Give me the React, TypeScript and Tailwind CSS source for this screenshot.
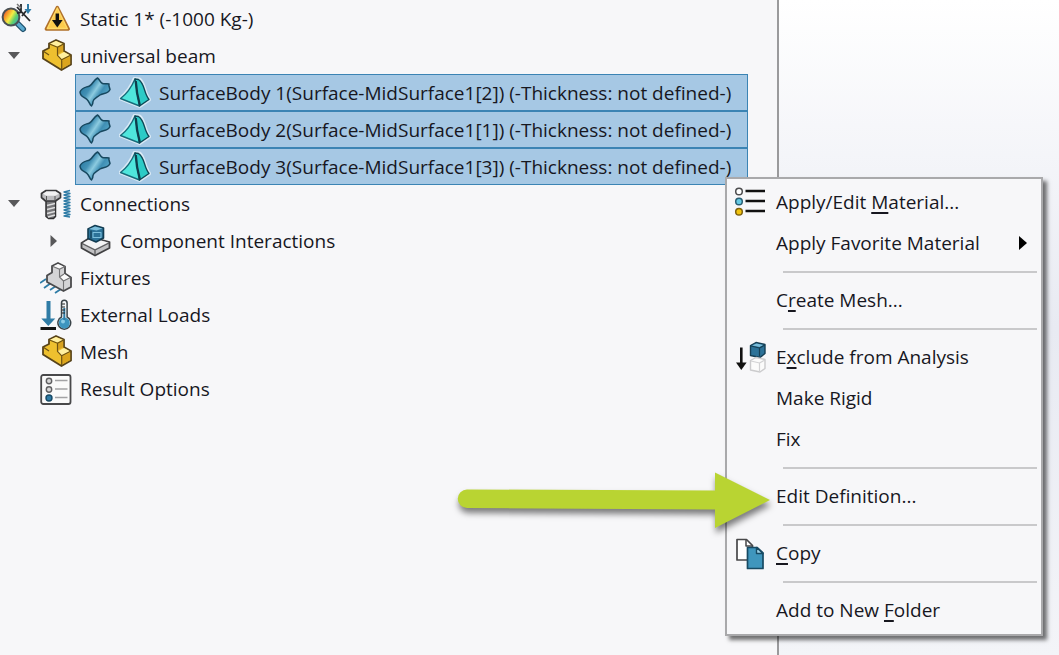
import React from 'react';

type IconProps = { className?: string };

const Svg: React.FC<{ children: React.ReactNode; className?: string; box?: string }> = ({
    children,
    className = 'w-8 h-9',
    box = '0 0 32 36',
}) => (
    <svg viewBox={box} className={`${className} shrink-0`} fill="none" strokeLinejoin="round" aria-hidden="true">
        {children}
    </svg>
);

const StudyIcon: React.FC = () => (
    <Svg>
        <defs>
            <linearGradient id="lens" x1="0" y1="0.2" x2="1" y2="0.8">
                <stop offset="0" stopColor="#e8402c" />
                <stop offset="0.28" stopColor="#f7a62b" />
                <stop offset="0.48" stopColor="#f4ec45" />
                <stop offset="0.7" stopColor="#62d06a" />
                <stop offset="1" stopColor="#2aa9c9" />
            </linearGradient>
        </defs>
        <path d="M17 22l6 6" stroke="#1d4f6b" strokeWidth="6" strokeLinecap="round" />
        <path d="M18 23l5 5" stroke="#5aa9cf" strokeWidth="3.5" strokeLinecap="round" />
        <circle cx="11" cy="16" r="8.4" fill="url(#lens)" stroke="#4a5054" strokeWidth="2" />
        <path d="M17 6l13 14M17 12l5-1M21 3v8M26 10l-4 5" stroke="#26282a" strokeWidth="1.8" />
        <path d="M17 3l4 4" stroke="#777" strokeWidth="1.4" />
        <path d="M28 3v6" stroke="#2f7ca6" strokeWidth="2" />
        <path d="M24.500 8h7L28 13z" fill="#2f7ca6" />
    </Svg>
);

const WarningIcon: React.FC = () => (
    <Svg className="w-7 h-9" box="0 0 28 36">
        <path d="M13.300 6.500L24.300 28H2.300z" fill="#f9c84a" stroke="#b0702a" strokeWidth="3.400" />
        <path d="M13.300 7L23.300 27.500H3.300z" fill="#fccb4d" stroke="#ffd968" strokeWidth="1.400" />
        <path d="M13.300 12.500v8" stroke="#111" strokeWidth="3.400" />
        <path d="M8 19h10.600l-5.300 7.500z" fill="#111" />
    </Svg>
);

const PartIcon: React.FC = () => (
    <Svg>
        <path
            d="M9 5.500L16 2l8 3.500v7.500l7 4v9.500L21.500 32 3 20.500V13l6-3z"
            fill="#eec02f"
            stroke="#57431a"
            strokeWidth="1.8"
        />
        <path d="M10 5.800L16 3l7 2.900-6 2.700z" fill="#fff0a0" />
        <path d="M17.500 17.500l6.500-3.500 6 3.300-8.500 4z" fill="#fff0a0" />
        <path d="M22 22.500l8.200-4v7.600l-8.200 4.500z" fill="#dca51d" />
        <path d="M17.500 9.500l5.700-2.700v6.500l-5.700 3z" fill="#d9a321" />
        <path d="M9.500 6l8 3.300v8l4.200 4.500v9.500M17.500 9.300L24 5.800M21.700 21.800L31 17M3 13l6 4" stroke="#6e5213" strokeWidth="1.2" />
    </Svg>
);

const FixtureIcon: React.FC = () => (
    <Svg>
        <path d="M0 23l6-4M4 28l7-5M10 30l6-4M15 33l6-4" stroke="#2f7ca6" strokeWidth="1.8" />
        <path
            d="M12 6l6-3 7 3.500v7l6 4V27l-7.500 4L7 22v-6.500l5-3z"
            fill="#d4d4d6"
            stroke="#4a4a4c"
            strokeWidth="1.8"
        />
        <path d="M13.500 6.300L18 4l5.500 2.500-4.500 2zM19 17l5.500-3 5 3.500-6.300 3z" fill="#fbfbfb" />
        <path d="M13 6.500l6.500 2.800V17l4 4v9M19.500 9.300L25 6.500M23.500 21l7-3.500M19.500 17l4.500-3" stroke="#747476" strokeWidth="1.1" />
    </Svg>
);

const BoltIcon: React.FC = () => (
    <Svg>
        <path d="M6 14h9.500v16.500L13.500 32.500h-5L6 30.500z" fill="#77777a" stroke="#303032" strokeWidth="1.5" />
        <path d="M7 19.500l8-2M7 23.500l8-2M7 27.500l8-2M8 31l7-2" stroke="#dededf" strokeWidth="1.4" />
        <path d="M1.500 7.500L6 4.500h10l4.500 3v4L15.500 15h-10l-4-3.500z" fill="#bdbdc0" stroke="#3a3a3c" strokeWidth="1.700" />
        <path d="M3 7.700l3.500-2.200h9l3.500 2.200-4 2H6.500z" fill="#f2f2f3" />
        <path d="M6.500 10v4.500M15 10v4.500" stroke="#555" strokeWidth="1" />
        <path
            d="M30 4.500l-6 1.500 6 1.500-6 1.500 6 1.500-6 1.500 6 1.500-6 1.500 6 1.500-6 1.500 6 1.500-6 1.500 6 1.500-6 1.500 6 1.500-6 1.500 6 1.500-6 1.500 6 1"
            stroke="#2f7ca6"
            strokeWidth="1.3"
        />
    </Svg>
);

const InteractionIcon: React.FC = () => (
    <Svg>
        <path d="M1.500 20L11 14l18.500 5v6L15 32.500 1.500 25z" fill="#c2c2c4" stroke="#414143" strokeWidth="1.8" />
        <path d="M3 20l8.500-5 16.500 4.500L15 26z" fill="#f4f4f5" />
        <path d="M2 20.500L15 27l14-7M15 27v5" stroke="#5a5a5c" strokeWidth="1.3" />
        <path d="M8 6l7-3.500 8.500 2.500v10L16 19l-8-3.500z" fill="#2c7298" stroke="#123c52" strokeWidth="1.6" />
        <path d="M9 6l6-2.500 7.500 2-6 2z" fill="#7dbfdc" />
        <path d="M13 9.500h8v5h-8z" stroke="#7dbfdc" strokeWidth="1.1" />
        <path d="M11 7.500v8" stroke="#123c52" strokeWidth="1.2" />
    </Svg>
);

const LoadsIcon: React.FC = () => (
    <Svg>
        <path d="M6.500 4h4v17.500h4.800L8.300 29l-7-7.500h5.200z" fill="#2f7ca6" />
        <path d="M0.500 31.500h15.500" stroke="#151515" strokeWidth="3" />
        <path d="M21.500 20V6a2.800 2.800 0 015.600 0v14a6.400 6.400 0 11-5.600 0z" fill="#f5f8fa" stroke="#3a4449" strokeWidth="1.5" />
        <circle cx="24.300" cy="26" r="5.500" fill="#3d95bf" />
        <circle cx="23" cy="24.500" r="2" fill="#8ccce6" />
        <path d="M24.300 11v12" stroke="#2f7ca6" strokeWidth="2" />
        <path d="M22 7h3M22 10h3M22 13h3M22 16h3" stroke="#222" strokeWidth="1.2" />
    </Svg>
);

const OptionsIcon: React.FC = () => (
    <Svg>
        <rect x="1.200" y="4" width="29.300" height="29" rx="2" fill="#fafafa" stroke="#48484a" strokeWidth="1.8" />
        <circle cx="9" cy="10" r="2.700" fill="#d8d8d8" stroke="#606062" strokeWidth="1.4" />
        <circle cx="9" cy="18.500" r="2.700" fill="#d8d8d8" stroke="#606062" strokeWidth="1.4" />
        <circle cx="9" cy="27" r="3" fill="#2f7ca6" stroke="#174a66" strokeWidth="1.4" />
        <path d="M15 9.500h12.500M15 18h12.500M15 26.500h12.500" stroke="#a2a2a4" strokeWidth="1.600" />
    </Svg>
);

const SurfaceIcon: React.FC = () => (
    <Svg>
        <defs>
            <linearGradient id="sheet" x1="0.1" y1="0.3" x2="0.9" y2="0.8">
                <stop offset="0" stopColor="#2f7fa6" />
                <stop offset="0.25" stopColor="#4391b5" />
                <stop offset="0.45" stopColor="#8ccbe0" />
                <stop offset="0.65" stopColor="#3f8fb4" />
                <stop offset="1" stopColor="#5cabca" />
            </linearGradient>
        </defs>
        <path
            d="M1 17C3 12 7 12.500 10.500 11 14 9 14.500 5 18.500 3c2.500 1.500 2.500 4.500 5 5.500s4-.5 6.500.5c-.5 2 .5 3 1 5.500-2 5-6.500 3-10 5.500-4 3-6.500 3.500-7 6.500 0 2-.5 3.500-1.500 4.500-2-1.500-2-4-4.500-6.500S1.500 22.500 1 17z"
            fill="url(#sheet)"
            stroke="#17485f"
            strokeWidth="1.500"
        />
    </Svg>
);

const ShellIcon: React.FC = () => (
    <Svg>
        <path
            d="M1.500 23.500C8 18 13 11 15.500 4l5 .5c5.500 5 4 13 9.500 20L20.500 31z"
            stroke="#d9e9f5"
            strokeWidth="4"
        />
        <path d="M1.500 23.500C9 18 13 11 16 4c2.500 8 3 18 4.500 27z" fill="#4fe6dc" stroke="#176b7a" strokeWidth="1.4" />
        <path d="M16 4l3.500.5c6.500 4 5 13 10.500 20L20.500 31C18 22 16.500 12 16 4z" fill="#2ccbc6" stroke="#0e4856" strokeWidth="1.4" />
        <path d="M17 6c.5 8 2 17 4 24" stroke="#0e3d4b" strokeWidth="1.800" />
    </Svg>
);

const MaterialIcon: React.FC = () => (
    <Svg>
        <path d="M11.500 7H31M11.500 17H31M11.500 27H31" stroke="#111" strokeWidth="2.600" />
        <circle cx="5" cy="7.500" r="3.300" fill="#fff" stroke="#4d4d4f" strokeWidth="1.5" />
        <circle cx="5" cy="17.500" r="3.300" fill="#67cbe5" stroke="#2a5f74" strokeWidth="1.5" />
        <circle cx="5" cy="27.800" r="3.300" fill="#f2c40f" stroke="#80620c" strokeWidth="1.5" />
    </Svg>
);

const ExcludeIcon: React.FC = () => (
    <Svg>
        <path d="M7.300 8.500v16" stroke="#111" strokeWidth="2.600" />
        <path d="M2 23.500h10.600L7.300 31z" fill="#111" />
        <path d="M16.500 6.500L22 3.500l9 2v9l-5 4-9.500-2z" fill="#2c7298" stroke="#153f55" strokeWidth="1.4" />
        <path d="M18 6.500l4.500-2 7 1.500-4 2z" fill="#79bddb" />
        <path d="M17 7l8.500 2v8.500M25.500 9L31 6" stroke="#153f55" strokeWidth="1.2" />
        <path d="M16.500 21.500l5.500-3 9 2v9L26 33l-9.500-2z" fill="#fbfbfb" stroke="#cbcbcd" strokeWidth="1.4" />
        <path d="M17 22l8.500 2v8.500M25.500 24l5.500-3" stroke="#d2d2d4" strokeWidth="1.2" />
    </Svg>
);

const CopyIcon: React.FC = () => (
    <Svg>
        <path d="M3 4.500h9.500l6 6V25H3z" fill="#fff" stroke="#48484a" strokeWidth="1.7" />
        <path d="M12 4.500V11h6" stroke="#48484a" strokeWidth="1.500" />
        <path d="M13.500 12.500h9.500l6 5.500V33.500H13.500z" fill="#3f96bd" stroke="#174a63" strokeWidth="1.700" />
        <path d="M22.500 12.500v6H29z" fill="#9fd5ea" stroke="#174a63" strokeWidth="1.400" />
    </Svg>
);

const Caret: React.FC<{ open?: boolean; label: string }> = ({ open, label }) => (
    <button type="button" aria-label={label} aria-expanded={!!open} className="flex items-center w-10 h-9 shrink-0 pl-2">
        <svg viewBox="0 0 12 12" className="w-3 h-3" fill="#58585a" aria-hidden="true">
            {open ? <path d="M0 2h12L6 9z" /> : <path d="M2.500 0v12L9 6z" />}
        </svg>
    </button>
);

const TreeRow: React.FC<{ icon: React.ReactNode; label: string; caret?: React.ReactNode }> = ({ icon, label, caret }) => (
    <div className="flex items-center h-[37px]">
        {caret ?? <span className="w-10 shrink-0" />}
        {icon}
        <span className="ml-2">{label}</span>
    </div>
);

const surfaceBodies = [
    'SurfaceBody 1(Surface-MidSurface1[2]) (-Thickness: not defined-)',
    'SurfaceBody 2(Surface-MidSurface1[1]) (-Thickness: not defined-)',
    'SurfaceBody 3(Surface-MidSurface1[3]) (-Thickness: not defined-)',
];

const SimulationTree: React.FC = () => (
    <ul className="whitespace-nowrap">
        <li className="flex items-center h-[37px]">
            <StudyIcon />
            <span className="ml-3 flex"><WarningIcon /></span>
            <span className="ml-2">Static 1* (-1000 Kg-)</span>
        </li>
        <li>
            <TreeRow icon={<PartIcon />} label="universal beam" caret={<Caret open label="Collapse universal beam" />} />
            <ul className="ml-[75px] w-fit">
                {surfaceBodies.map(name => (
                    <li
                        key={name}
                        className="flex items-center gap-2 h-[37px] pl-[3px] pr-4 border border-[#3b84b4] bg-[#a6c8e4]"
                    >
                        <SurfaceIcon />
                        <ShellIcon />
                        <span>{name}</span>
                    </li>
                ))}
            </ul>
        </li>
        <li>
            <TreeRow icon={<BoltIcon />} label="Connections" caret={<Caret open label="Collapse Connections" />} />
            <ul className="ml-10">
                <li>
                    <TreeRow icon={<InteractionIcon />} label="Component Interactions" caret={<Caret label="Expand Component Interactions" />} />
                </li>
            </ul>
        </li>
        <li><TreeRow icon={<FixtureIcon />} label="Fixtures" /></li>
        <li><TreeRow icon={<LoadsIcon />} label="External Loads" /></li>
        <li><TreeRow icon={<PartIcon />} label="Mesh" /></li>
        <li><TreeRow icon={<OptionsIcon />} label="Result Options" /></li>
    </ul>
);

const Key: React.FC<{ children: string }> = ({ children }) => (
    <span className="underline decoration-2 underline-offset-3">{children}</span>
);

const MenuItem: React.FC<{ icon?: React.ReactNode; children: React.ReactNode; submenu?: boolean }> = ({
    icon,
    children,
    submenu,
}) => (
    <button
        type="button"
        role="menuitem"
        aria-haspopup={submenu ? 'menu' : undefined}
        className="flex items-center w-full h-[41px] pl-[7px] pr-3.5 text-left"
    >
        {icon ?? <span className="w-8 shrink-0" />}
        <span className="ml-2.5 flex-1">{children}</span>
        {submenu && (
            <svg viewBox="0 0 8 14" className="w-2 h-3.5" fill="#000" aria-hidden="true">
                <path d="M0 0l8 7-8 7z" />
            </svg>
        )}
    </button>
);

const Separator: React.FC = () => (
    <div role="separator" className="h-4 pt-2 ml-14 mr-1">
        <div className="h-0.5 bg-[#c9c9cb]" />
    </div>
);

const ContextMenu: React.FC<IconProps> = ({ className }) => (
    <div
        role="menu"
        className={`${className} pt-0.5 pb-1 whitespace-nowrap bg-[#f7f7f9] border-2 border-[#a9a9ab] shadow-[4px_4px_4px_#0000008c]`}
    >
        <MenuItem icon={<MaterialIcon />}>Apply/Edit <Key>M</Key>aterial...</MenuItem>
        <MenuItem submenu>Apply Favorite Material</MenuItem>
        <Separator />
        <MenuItem>C<Key>r</Key>eate Mesh...</MenuItem>
        <Separator />
        <MenuItem icon={<ExcludeIcon />}>E<Key>x</Key>clude from Analysis</MenuItem>
        <MenuItem>Make Rigid</MenuItem>
        <MenuItem>Fix</MenuItem>
        <Separator />
        <MenuItem>Edit Definition...</MenuItem>
        <Separator />
        <MenuItem icon={<CopyIcon />}><Key>C</Key>opy</MenuItem>
        <Separator />
        <MenuItem>Add to New <Key>F</Key>older</MenuItem>
    </div>
);

const PointerArrow: React.FC<IconProps> = ({ className }) => (
    <svg viewBox="0 0 330 80" className={className} aria-hidden="true">
        <path
            d="M17 25.500l248 1V8.500L320 36l-55 28V45.500l-248-1.500a9.200 9.200 0 010-18.500z"
            fill="#b9d432"
        />
    </svg>
);

const App: React.FC = () => {
    return (
        <div className="relative flex min-h-screen overflow-hidden text-[19px] leading-7 text-[#17171f] font-['Open_Sans','Noto_Sans',sans-serif]">
            <main className="flex-1 min-w-0 bg-[#f7f7f9] border-r-2 border-[#9a9a9c]">
                <SimulationTree />
            </main>
            <aside className="w-[280px] shrink-0 bg-linear-to-b from-white via-[#e8eaf2] to-[#f3f4f8]" />

            <ContextMenu className="absolute top-[177px] right-4 w-[318px]" />
            <PointerArrow className="absolute top-[464px] right-[279px] w-[330px] h-20 drop-shadow-[1px_5px_3px_#00000080]" />
        </div>
    );
};

export default App;
